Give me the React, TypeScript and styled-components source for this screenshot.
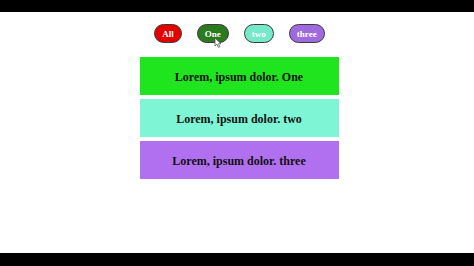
import styled, { createGlobalStyle } from "styled-components";

const GlobalStyle = createGlobalStyle`
  html, body {
    margin: 0;
    padding: 0;
    background: #000;
  }
`;

type T_Filter = {
  label: string;
  bg: string;
  color: string;
};

type T_Item = {
  id: number;
  text: string;
  bg: string;
};

const filters: T_Filter[] = [
  { label: "All", bg: "#e30000", color: "#fff" },
  { label: "One", bg: "#2a7a1e", color: "#fff" },
  { label: "two", bg: "#76e9c9", color: "#fff" },
  { label: "three", bg: "#a06adf", color: "#fff" },
];

const items: T_Item[] = [
  { id: 1, text: "Lorem, ipsum dolor. One", bg: "#1fe51f" },
  { id: 2, text: "Lorem, ipsum dolor. two", bg: "#7ef6d5" },
  { id: 3, text: "Lorem, ipsum dolor. three", bg: "#b170f0" },
];

function App() {
  return (
    <>
      <GlobalStyle />
      <Screen>
        <Page>
          <FilterBar>
            {filters.map((f) => (
              <FilterButton key={f.label} $bg={f.bg} $color={f.color}>
                {f.label}
                {f.label === "One" && (
                  <Cursor width="8" height="11" viewBox="0 0 8 11">
                    <path
                      d="M1 1 L1 9 L3 7.2 L4.5 10.3 L5.8 9.7 L4.4 6.7 L7 6.7 Z"
                      fill="#fff"
                      stroke="#555"
                      strokeWidth="0.8"
                      strokeLinejoin="round"
                    />
                  </Cursor>
                )}
              </FilterButton>
            ))}
          </FilterBar>
          <List>
            {items.map((item) => (
              <Card key={item.id} $bg={item.bg}>
                {item.text}
              </Card>
            ))}
          </List>
        </Page>
      </Screen>
    </>
  );
}

const Screen = styled.div`
  height: 266px;
  display: flex;
  flex-flow: column nowrap;
  padding: 12px 0 13px;
  box-sizing: border-box;
  background-color: #000;
`;

const Page = styled.div`
  flex: 1;
  display: flex;
  flex-flow: column nowrap;
  align-items: center;
  padding-top: 12px;
  background-color: #fff;
  font-family: "Liberation Serif", "Times New Roman", serif;
`;

const FilterBar = styled.div`
  display: flex;
  align-items: center;
  gap: 15px;
  margin-left: 5px;
`;

const FilterButton = styled.button<{ $bg: string; $color: string }>`
  position: relative;
  height: 19px;
  padding: 0 7px;
  border: 1px solid #3a3a3a;
  border-radius: 10px;
  background-color: ${(p) => p.$bg};
  color: ${(p) => p.$color};
  font-family: inherit;
  font-size: 9px;
  font-weight: 700;
  cursor: pointer;
`;

const Cursor = styled.svg`
  position: absolute;
  left: 16px;
  top: 12px;
`;

const List = styled.div`
  margin-top: 14px;
  margin-left: 4px;
  width: 199px;
  display: flex;
  flex-flow: column nowrap;
  gap: 4px;
`;

const Card = styled.div<{ $bg: string }>`
  height: 38px;
  padding-top: 2px;
  box-sizing: border-box;
  display: flex;
  justify-content: center;
  align-items: center;
  background-color: ${(p) => p.$bg};
  color: #111;
  font-size: 12px;
  font-weight: 700;
`;

export default App;
